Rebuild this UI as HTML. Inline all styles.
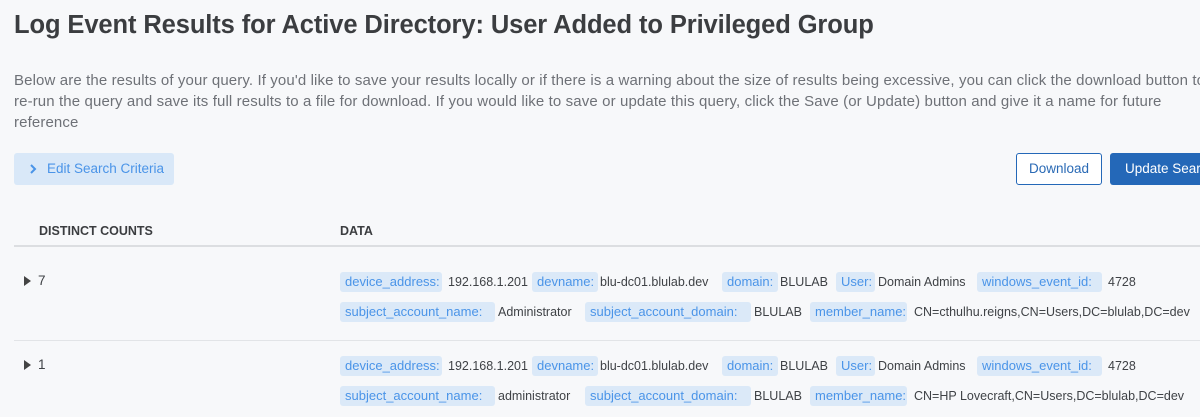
<!DOCTYPE html>
<html><head><style>
body{margin:0;width:1200px;height:417px;overflow:hidden;background:#f7f8fa;font-family:"Liberation Sans",sans-serif;position:relative}
.a{position:absolute;white-space:nowrap}
h1{position:absolute;left:14px;top:11px;margin:0;font-size:25.5px;font-weight:bold;color:#3b3d40;white-space:nowrap;letter-spacing:-0.1px}
.p{left:14px;font-size:15px;color:#6e7177;line-height:21px;letter-spacing:0.12px}
.t{position:absolute;height:20px;line-height:20px;font-size:13px;color:#4a94e8;background:#dbe9f8;border-radius:3px;padding:0 5px;white-space:nowrap;box-sizing:border-box;overflow:hidden}
.v{position:absolute;line-height:20px;font-size:12.5px;color:#3f4246;white-space:nowrap}
</style></head><body>
<h1>Log Event Results for Active Directory: User Added to Privileged Group</h1>
<div class="a p" style="top:70px">Below are the results of your query. If you'd like to save your results locally or if there is a warning about the size of results being excessive, you can click the download button to</div>
<div class="a p" style="top:91px">re-run the query and save its full results to a file for download. If you would like to save or update this query, click the Save (or Update) button and give it a name for future</div>
<div class="a p" style="top:112px">reference</div>

<div class="a" style="left:14px;top:153px;width:160px;height:32px;background:#d9e8f8;border-radius:3px"></div>
<svg class="a" style="left:29px;top:164px" width="8" height="10"><path d="M2 1l4 4-4 4" stroke="#4a94e8" stroke-width="2" fill="none"/></svg>
<div class="a" style="left:47px;top:161px;font-size:13.5px;color:#4a94e8">Edit Search Criteria</div>

<div class="a" style="left:1016px;top:153px;width:86px;height:32px;border:1px solid #2468b8;border-radius:3px;box-sizing:border-box;background:#fff;text-align:center;line-height:30px;font-size:13.5px;color:#2a6ab5">Download</div>
<div class="a" style="left:1110px;top:153px;width:110px;height:32px;background:#2468b8;border-radius:3px;line-height:32px;font-size:13.5px;color:#fff;padding-left:15px;box-sizing:border-box">Update Search</div>

<div class="a" style="left:39px;top:224px;font-size:12.5px;font-weight:bold;color:#3b3d40">DISTINCT COUNTS</div>
<div class="a" style="left:340px;top:224px;font-size:12.5px;font-weight:bold;color:#3b3d40">DATA</div>
<div class="a" style="left:14px;top:245px;width:1186px;height:2px;background:#dcdee1"></div>
<div class="a" style="left:14px;top:340px;width:1186px;height:1px;background:#e2e4e7"></div>

<svg class="a" style="left:24px;top:276px" width="8" height="10"><path d="M0 0l7 5-7 5z" fill="#444"/></svg>
<div class="a" style="left:38px;top:273px;font-size:13.5px;color:#3f4246">7</div>
<svg class="a" style="left:24px;top:360px" width="8" height="10"><path d="M0 0l7 5-7 5z" fill="#444"/></svg>
<div class="a" style="left:38px;top:357px;font-size:13.5px;color:#3f4246">1</div>

<div class="t" style="left:340px;top:272px;width:102px">device_address:</div><div class="v" style="left:448px;top:272px">192.168.1.201</div>
<div class="t" style="left:532px;top:272px;width:66px">devname:</div><div class="v" style="left:600px;top:272px">blu-dc01.blulab.dev</div>
<div class="t" style="left:722px;top:272px;width:56px">domain:</div><div class="v" style="left:780px;top:272px">BLULAB</div>
<div class="t" style="left:836px;top:272px;width:39px">User:</div><div class="v" style="left:878px;top:272px">Domain Admins</div>
<div class="t" style="left:977px;top:272px;width:125px">windows_event_id:</div><div class="v" style="left:1108px;top:272px">4728</div>
<div class="t" style="left:340px;top:302px;width:155px">subject_account_name:</div><div class="v" style="left:498px;top:302px">Administrator</div>
<div class="t" style="left:585px;top:302px;width:166px">subject_account_domain:</div><div class="v" style="left:754px;top:302px">BLULAB</div>
<div class="t" style="left:810px;top:302px;width:97px">member_name:</div><div class="v" style="left:914px;top:302px">CN=cthulhu.reigns,CN=Users,DC=blulab,DC=dev</div>

<div class="t" style="left:340px;top:356px;width:102px">device_address:</div><div class="v" style="left:448px;top:356px">192.168.1.201</div>
<div class="t" style="left:532px;top:356px;width:66px">devname:</div><div class="v" style="left:600px;top:356px">blu-dc01.blulab.dev</div>
<div class="t" style="left:722px;top:356px;width:56px">domain:</div><div class="v" style="left:780px;top:356px">BLULAB</div>
<div class="t" style="left:836px;top:356px;width:39px">User:</div><div class="v" style="left:878px;top:356px">Domain Admins</div>
<div class="t" style="left:977px;top:356px;width:125px">windows_event_id:</div><div class="v" style="left:1108px;top:356px">4728</div>
<div class="t" style="left:340px;top:386px;width:155px">subject_account_name:</div><div class="v" style="left:498px;top:386px">administrator</div>
<div class="t" style="left:585px;top:386px;width:166px">subject_account_domain:</div><div class="v" style="left:754px;top:386px">BLULAB</div>
<div class="t" style="left:810px;top:386px;width:97px">member_name:</div><div class="v" style="left:914px;top:386px">CN=HP Lovecraft,CN=Users,DC=blulab,DC=dev</div>
</body></html>
